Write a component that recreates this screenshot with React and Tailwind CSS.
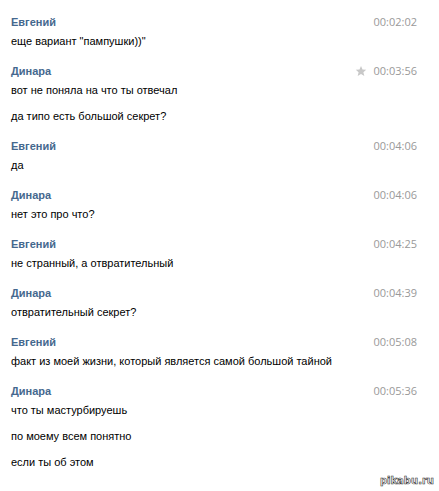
import React from "react";

const groups = [
  { name: "Евгений", time: "00:02:02", msgs: ["еще вариант \"пампушки))\""] },
  { name: "Динара", time: "00:03:56", star: true, msgs: ["вот не поняла на что ты отвечал", "да типо есть большой секрет?"] },
  { name: "Евгений", time: "00:04:06", msgs: ["да"] },
  { name: "Динара", time: "00:04:06", msgs: ["нет это про что?"] },
  { name: "Евгений", time: "00:04:25", msgs: ["не странный, а отвратительный"] },
  { name: "Динара", time: "00:04:39", msgs: ["отвратительный секрет?"] },
  { name: "Евгений", time: "00:05:08", msgs: ["факт из моей жизни, который является самой большой тайной"] },
  { name: "Динара", time: "00:05:36", msgs: ["что ты мастурбируешь", "по моему всем понятно", "если ты об этом"] },
];

function Star() {
  return (
    <svg width="12" height="12" viewBox="0 0 24 24" className="mr-[6px]">
      <path d="M12 2l3 7 7.5.6-5.7 5 1.8 7.4L12 18l-6.6 4 1.8-7.4-5.7-5L9 9z" fill="#c8c8c8" />
    </svg>
  );
}

export default function App() {
  return (
    <div className="relative w-[439px] h-[491px] bg-white overflow-hidden" style={{ fontFamily: "Tahoma, 'Liberation Sans', sans-serif" }}>
      <div className="flex flex-col gap-[16px] pt-[15px] pl-[11px] pr-[22px]">
        {groups.map((g, i) => (
          <div key={i} className="flex flex-col">
            <div className="flex items-center justify-between h-[14px]">
              <span className="text-[11px] font-bold text-[#45688e] leading-[14px]">{g.name}</span>
              <span className="flex items-center text-[11px] text-[#999] leading-[14px]" style={{ fontFamily: "'Open Sans', sans-serif" }}>
                {g.star && <Star />}
                {g.time}
              </span>
            </div>
            <div className="flex flex-col gap-[12px] mt-[5px]">
              {g.msgs.map((m, j) => (
                <div key={j} className="text-[11px] text-black leading-[14px]">{m}</div>
              ))}
            </div>
          </div>
        ))}
      </div>
      <div
        className="absolute right-[5px] bottom-[3px] text-[10px] font-bold text-white"
        style={{ fontFamily: "'DejaVu Sans', sans-serif", WebkitTextStroke: "0.6px #333" }}
      >
        pikabu.ru
      </div>
    </div>
  );
}
